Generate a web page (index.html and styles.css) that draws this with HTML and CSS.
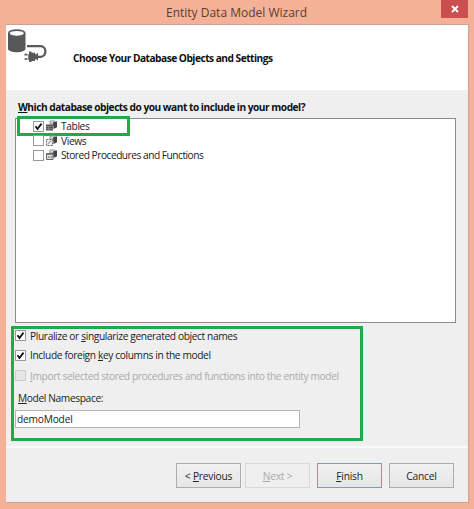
FILE: index.html
```
<!DOCTYPE html>
<html lang="en">
<head>
    <meta charset="UTF-8">
    <meta name="viewport" content="width=device-width, initial-scale=1.0">
    <title>Entity Data Model Wizard</title>
    <link rel="stylesheet" href="styles.css">
</head>
<body>
    <div class="window">
        <header class="titlebar">
            <span class="title">Entity Data Model Wizard</span>
            <button class="close" aria-label="Close">
                <svg width="8" height="8" viewBox="0 0 8 8"><path d="M1 1l6 6M7 1L1 7" stroke="#fff" stroke-width="1.8"/></svg>
            </button>
        </header>

        <main class="client">
            <section class="banner">
                <svg class="banner-icon" width="42" height="36" viewBox="0 0 42 36">
                    <path d="M1 4v15.500c0 5 17.500 5 17.500 0V4z" fill="#57585a"/>
                    <ellipse cx="9.750" cy="4" rx="8.750" ry="3.800" fill="#57585a"/>
                    <ellipse cx="9.750" cy="4.300" rx="7" ry="2.400" fill="#fff"/>
                    <path d="M20 17.200h13.500c6.500 0 6.500 10.600 0 10.600H31" fill="none" stroke="#57585a" stroke-width="2.300"/>
                    <path d="M17.500 25.700h3M17.500 30h3" stroke="#57585a" stroke-width="1.700"/>
                    <path d="M22 22.500h2.500v1.300H28v1.500h1.700v-1H31v7h-1.300v-1H28v1.700h-3.500V33H22v-2.200h-.8v-5.600h.8z" fill="#57585a"/>
                </svg>
                <h1 class="banner-title">Choose Your Database Objects and Settings</h1>
            </section>

            <section class="objects">
                <h2 class="question"><u>W</u>hich database objects do you want to include in your model?</h2>
                <ul class="tree">
                    <li class="tree-item">
                        <span class="check"><svg viewBox="0 0 9 9"><path d="M1.500 4.200l2 2.800L7.500 1.600"/></svg></span>
                        <svg class="node-icon" width="13" height="12" viewBox="0 0 13 12">
                            <path d="M5 1h5v3H5z" fill="#ddd" stroke="#999"/>
                            <path d="M8 2.500l4-1.200v6L8.500 9z" fill="#444"/>
                            <path d="M1 4.500h7v6H1z" fill="#555"/>
                            <path d="M1 6.500h7M1 8.500h7M3.500 6v4.500" stroke="#999" stroke-width=".6"/>
                        </svg>
                        <span class="node-label">Tables</span>
                        <span class="highlight"></span>
                    </li>
                    <li class="tree-item">
                        <span class="check"></span>
                        <svg class="node-icon" width="13" height="12" viewBox="0 0 13 12">
                            <path d="M5 1h5v3H5z" fill="#ddd" stroke="#999"/>
                            <path d="M8 2.500l4-1.200v6L8.500 9z" fill="#444"/>
                            <path d="M1.500 4.500h6v6h-6z" fill="#eee" stroke="#666" stroke-dasharray="2 1"/>
                            <path d="M3 8.800l3-3" stroke="#666"/>
                        </svg>
                        <span class="node-label">Views</span>
                    </li>
                    <li class="tree-item">
                        <span class="check"></span>
                        <svg class="node-icon" width="13" height="12" viewBox="0 0 13 12">
                            <path d="M5 1h5v3H5z" fill="#ddd" stroke="#999"/>
                            <path d="M8 2.500l4-1.200v6L8.500 9z" fill="#444"/>
                            <path d="M1.500 4.500h6.500v6H1.500z" fill="#ddd" stroke="#666"/>
                            <path d="M1.500 5.200h6.500M3 8h1.500M5.500 8H7" stroke="#666"/>
                        </svg>
                        <span class="node-label label-long">Stored Procedures and Functions</span>
                    </li>
                </ul>
            </section>

            <section class="options">
                <label class="option">
                    <span class="check"><svg viewBox="0 0 9 9"><path d="M1.500 4.200l2 2.800L7.500 1.600"/></svg></span>
                    <span>Pluralize or <u>s</u>ingularize generated object names</span>
                </label>
                <label class="option">
                    <span class="check"><svg viewBox="0 0 9 9"><path d="M1.500 4.200l2 2.800L7.500 1.600"/></svg></span>
                    <span>Include foreign <u>k</u>ey columns in the model</span>
                </label>
                <label class="option disabled">
                    <span class="check"></span>
                    <span><u>I</u>mport selected stored procedures and functions into the entity model</span>
                </label>
                <label class="field-label" for="namespace"><u>M</u>odel Namespace:</label>
                <input class="field" id="namespace" type="text" value="demoModel">
            </section>

            <footer class="actions">
                <button class="btn">&lt; <u>P</u>revious</button>
                <button class="btn btn-next" disabled><u>N</u>ext &gt;</button>
                <button class="btn btn-default"><u>F</u>inish</button>
                <button class="btn">Cancel</button>
            </footer>
        </main>
    </div>
</body>
</html>
```
FILE: styles.css
```
* { box-sizing: border-box; }
body { margin: 0; font-family: "Open Sans", "Noto Sans", sans-serif; font-size: 10.2px; letter-spacing: -0.37px; color: #222; }
h1, h2, ul { margin: 0; padding: 0; font-size: inherit; }
u { text-decoration: underline; text-decoration-thickness: 1px; text-underline-offset: 1px; text-decoration-skip-ink: none; }
button, input { font: inherit; color: inherit; letter-spacing: -0.2px; }

.window { display: flex; flex-direction: column; width: 474px; height: 509px; padding: 0 5px 6px 6px; background: #f4b195; }

/* title bar */
.titlebar { display: flex; align-items: flex-start; justify-content: flex-end; height: 24px; padding-right: 1px; }
.title { flex: 1; padding: 4px 0 0 160px; font-size: 12px; line-height: 18px; letter-spacing: 0; color: #5b3d31; white-space: nowrap; }
.close { display: flex; align-items: center; justify-content: center; width: 27px; height: 18px; padding: 0; border: 0; background: #c94f50; }

.client { display: flex; flex-direction: column; flex: 1; border: 1px solid #c9a393; border-width: 1px 1px 1px 0; background: #efefef; }

/* white strip with the wizard page name */
.banner { display: flex; align-items: flex-start; height: 65px; padding: 4px 0 0 1px; background: #fff; }
.banner-title { margin: 21px 0 0 24px; line-height: 16px; font-weight: 700; letter-spacing: -0.52px; color: #111; white-space: nowrap; }

/* object list */
.objects { padding: 9px 12px 0 9px; }
.question { padding-left: 3px; line-height: 16px; font-weight: 700; letter-spacing: -0.5px; color: #111; white-space: nowrap; }
.tree { height: 205px; margin-top: 3px; border: 1px solid #8b8d91; background: #fff; list-style: none; }
.tree-item { position: relative; display: flex; align-items: center; height: 14.5px; padding-left: 17px; }
.node-icon { margin-left: 1px; }
.node-label { margin-left: 3px; white-space: nowrap; }
.label-long { letter-spacing: -0.5px; }
.highlight { position: absolute; left: 1px; top: -3px; width: 113px; height: 20px; border: 3px solid #22a94c; }

.check { display: block; flex: none; width: 11px; height: 11px; border: 1px solid #999; background: #fff; }
.check svg { display: block; width: 9px; height: 9px; fill: none; stroke: #111; stroke-width: 1.8; }

/* model settings */
.options { display: flex; flex-direction: column; width: 352px; height: 115px; margin: 3px 0 0 5px; padding-left: 1px; border: 3px solid #22a94c; }
.option { display: flex; align-items: center; height: 20.5px; gap: 4px; white-space: nowrap; }
.option:first-child { height: 13px; margin-bottom: 3px; }
.disabled { color: #aaa; }
.disabled .check { border-color: #ccc; background: #e6e6e6; }
.field-label { margin: 5px 0 0 3px; line-height: 14px; }
.field { width: 285px; height: 18px; margin-top: 5px; padding: 0 1px; border: 1px solid #b5b5b5; background: #fff; }

/* wizard buttons */
.actions { display: flex; justify-content: flex-end; flex: 1; align-items: flex-start; margin-top: 5px; padding: 15px 14px 0 0; border-top: 2px solid #fbfbfb; }
.btn { width: 65px; height: 25px; margin-left: 7px; padding: 0; border: 1px solid #adadad; background: linear-gradient(#f1f1f1, #e6e6e6); white-space: nowrap; }
.btn-next { margin-left: 4px; }
.btn:disabled { border-color: #d9d9d9; background: #efefef; color: #aaa; }
.btn-default { border-color: #5ea3ea; }
```
